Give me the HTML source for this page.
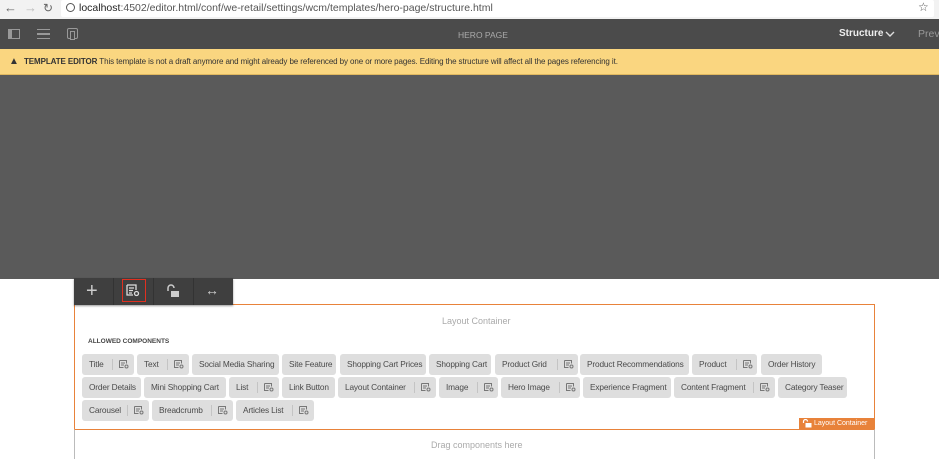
<!DOCTYPE html>
<html><head><meta charset="utf-8"><style>
*{margin:0;padding:0;box-sizing:border-box}
body{width:939px;height:454px;overflow:hidden;background:#fff;font-family:"Liberation Sans",sans-serif;position:relative}
.a{position:absolute}
.chip{position:absolute;height:21px;background:#dedede;border-radius:3px;font-size:8.3px;letter-spacing:-0.15px;color:#4a4a4a;line-height:21px;padding-left:7px;white-space:nowrap;overflow:hidden}
.chip i{position:absolute;top:5px;width:1px;height:11px;background:#c4c4c4}
.chip svg{position:absolute;top:6px}
</style></head><body>
<div class="a" style="left:0;top:0;width:939px;height:19px;background:#f2f2f2"></div>
<div class="a" style="left:4px;top:1px;font-size:13px;color:#666;line-height:14px">&#8592;</div>
<div class="a" style="left:24px;top:1px;font-size:13px;color:#bbb;line-height:14px">&#8594;</div>
<div class="a" style="left:43px;top:1px;font-size:12px;color:#666;line-height:14px">&#8635;</div>
<div class="a" style="left:61px;top:0;width:873px;height:17px;background:#fff;border-radius:2px"></div>
<div class="a" style="left:66px;top:3px;width:9px;height:9px;border:1px solid #555;border-radius:50%"></div>
<div class="a" style="left:79px;top:2px;font-size:10.5px;color:#555;line-height:13px"><b style="color:#222;font-weight:normal">localhost</b>:4502/editor.html/conf/we-retail/settings/wcm/templates/hero-page/structure.html</div>
<div class="a" style="left:918px;top:0px;font-size:12px;color:#555;line-height:15px">&#9734;</div>
<div class="a" style="left:0;top:19px;width:939px;height:30px;background:#4b4b4b"></div>
<div class="a" style="left:8px;top:29px;width:12px;height:10px;border:1.5px solid #999"></div>
<div class="a" style="left:8px;top:29px;width:4px;height:10px;background:#999"></div>
<div class="a" style="left:37px;top:29px;width:13px;height:10px;border-top:1.5px solid #999;border-bottom:1.5px solid #999"></div>
<div class="a" style="left:37px;top:33px;width:13px;height:1.5px;background:#999"></div>
<div class="a" style="left:67px;top:28px;width:11px;height:11px;border:1.5px solid #999;border-radius:2px"></div>
<div class="a" style="left:70px;top:31px;width:5px;height:9px;border:1.5px solid #999;background:#4b4b4b"></div>
<div class="a" style="left:458px;top:30px;font-size:8.5px;color:#aaa">HERO PAGE</div>
<div class="a" style="left:839px;top:28px;font-size:10px;color:#eee;font-weight:bold">Structure</div>
<svg class="a" style="left:885px;top:31px" width="10" height="7" viewBox="0 0 10 7"><path d="M1 1l4 4 4-4" stroke="#ddd" stroke-width="1.4" fill="none"/></svg>
<div class="a" style="left:918px;top:28px;font-size:10.5px;color:#999">Prev</div>
<div class="a" style="left:0;top:49px;width:939px;height:26px;background:#fad680;border-bottom:1px solid #e0b860"></div>
<div class="a" style="left:9px;top:56px;font-size:10px;color:#333">&#9650;</div>
<div class="a" style="left:24px;top:57px;font-size:8px;color:#333;letter-spacing:-0.1px"><b>TEMPLATE EDITOR</b> This template is not a draft anymore and might already be referenced by one or more pages. Editing the structure will affect all the pages referencing it.</div>
<div class="a" style="left:0;top:75px;width:939px;height:204px;background:#5a5a5a"></div>
<div class="a" style="left:74px;top:304px;width:801px;height:126px;border:1.5px solid #e8823a"></div>
<div class="a" style="left:74px;top:429px;width:801px;height:30px;border-left:1px solid #bbb;border-right:1px solid #bbb;border-top:1px solid #e8823a"></div>
<div class="a" style="left:442px;top:316px;font-size:9px;color:#aaa">Layout Container</div>
<div class="a" style="left:431px;top:440px;font-size:9px;color:#aaa">Drag components here</div>
<div class="a" style="left:88px;top:338px;font-size:6.5px;color:#444;font-weight:bold">ALLOWED COMPONENTS</div>
<div class="a" style="left:799px;top:418px;width:76px;height:11px;background:#e8823a;color:#fff;font-size:7px;line-height:11px;padding-left:15px">Layout Container</div>
<svg class="a" style="left:802px;top:419px" width="10" height="9" viewBox="0 0 10 9"><path d="M1.5 4V2.5a2 2 0 0 1 4 0" stroke="#fff" stroke-width="1.2" fill="none"/><rect x="3.5" y="4" width="6" height="4.5" fill="#fff"/></svg>
<div class="a" style="left:74px;top:278px;width:159px;height:27px;background:#3f3f3f;box-shadow:0 1px 2px rgba(0,0,0,.4)"></div>
<div class="a" style="left:113px;top:278px;width:1px;height:27px;background:#333"></div>
<div class="a" style="left:153px;top:278px;width:1px;height:27px;background:#333"></div>
<div class="a" style="left:193px;top:278px;width:1px;height:27px;background:#333"></div>
<div class="a" style="left:86px;top:279px;font-size:20px;color:#ccc;line-height:24px">+</div>
<div class="a" style="left:122px;top:279px;width:24px;height:23px;border:1.5px solid #e03020"></div>
<svg class="a" style="left:126px;top:284px" width="14" height="13" viewBox="0 0 14 13"><path d="M1 1h9v5M1 1v10h6M3 4h5M3 6.5h4M3 9h3" stroke="#ddd" stroke-width="1.3" fill="none"/><circle cx="10.5" cy="9.5" r="2" stroke="#ddd" stroke-width="1.3" fill="none"/></svg>
<svg class="a" style="left:166px;top:284px" width="14" height="14" viewBox="0 0 14 14"><path d="M2 7V4a3 3 0 0 1 6 0" stroke="#ccc" stroke-width="1.5" fill="none"/><rect x="5" y="7" width="8" height="6" fill="#ccc"/></svg>
<div class="a" style="left:205px;top:282px;font-size:14px;color:#ccc">&#8596;</div>
<div id="chips"></div>
<script>
var rows=[[354,[["Title",82,134,112],["Text",137,189,167],["Social Media Sharing",192,279],["Site Feature",282,336],["Shopping Cart Prices",340,426],["Shopping Cart",429,491],["Product Grid",495,578,557],["Product Recommendations",580,689],["Product",692,757,736],["Order History",761,822]]],
[377,[["Order Details",82,141],["Mini Shopping Cart",144,226],["List",229,279,257],["Link Button",282,335],["Layout Container",338,436,414],["Image",439,498,477],["Hero Image",501,580,559],["Experience Fragment",583,671],["Content Fragment",674,775,753],["Category Teaser",778,847]]],
[400,[["Carousel",82,149,127],["Breadcrumb",152,233,211],["Articles List",236,314,292]]]];
var h="";rows.forEach(function(r){r[1].forEach(function(c){var w=c[2]-c[1];h+='<div class="chip" style="left:'+c[1]+'px;top:'+r[0]+'px;width:'+w+'px">'+c[0];if(c[3]){var s=c[3]-c[1];h+='<i style="left:'+s+'px"></i><svg style="left:'+(s+7)+'px" width="10" height="9" viewBox="0 0 10 9"><path d="M.5.5h7v3M.5.5v7h4M2 3h4M2 5h3" stroke="#777" fill="none"/><circle cx="7.5" cy="6.5" r="1.5" stroke="#777" fill="none"/></svg>';}h+='</div>';});});
document.getElementById("chips").innerHTML=h;
</script>
</body></html>
